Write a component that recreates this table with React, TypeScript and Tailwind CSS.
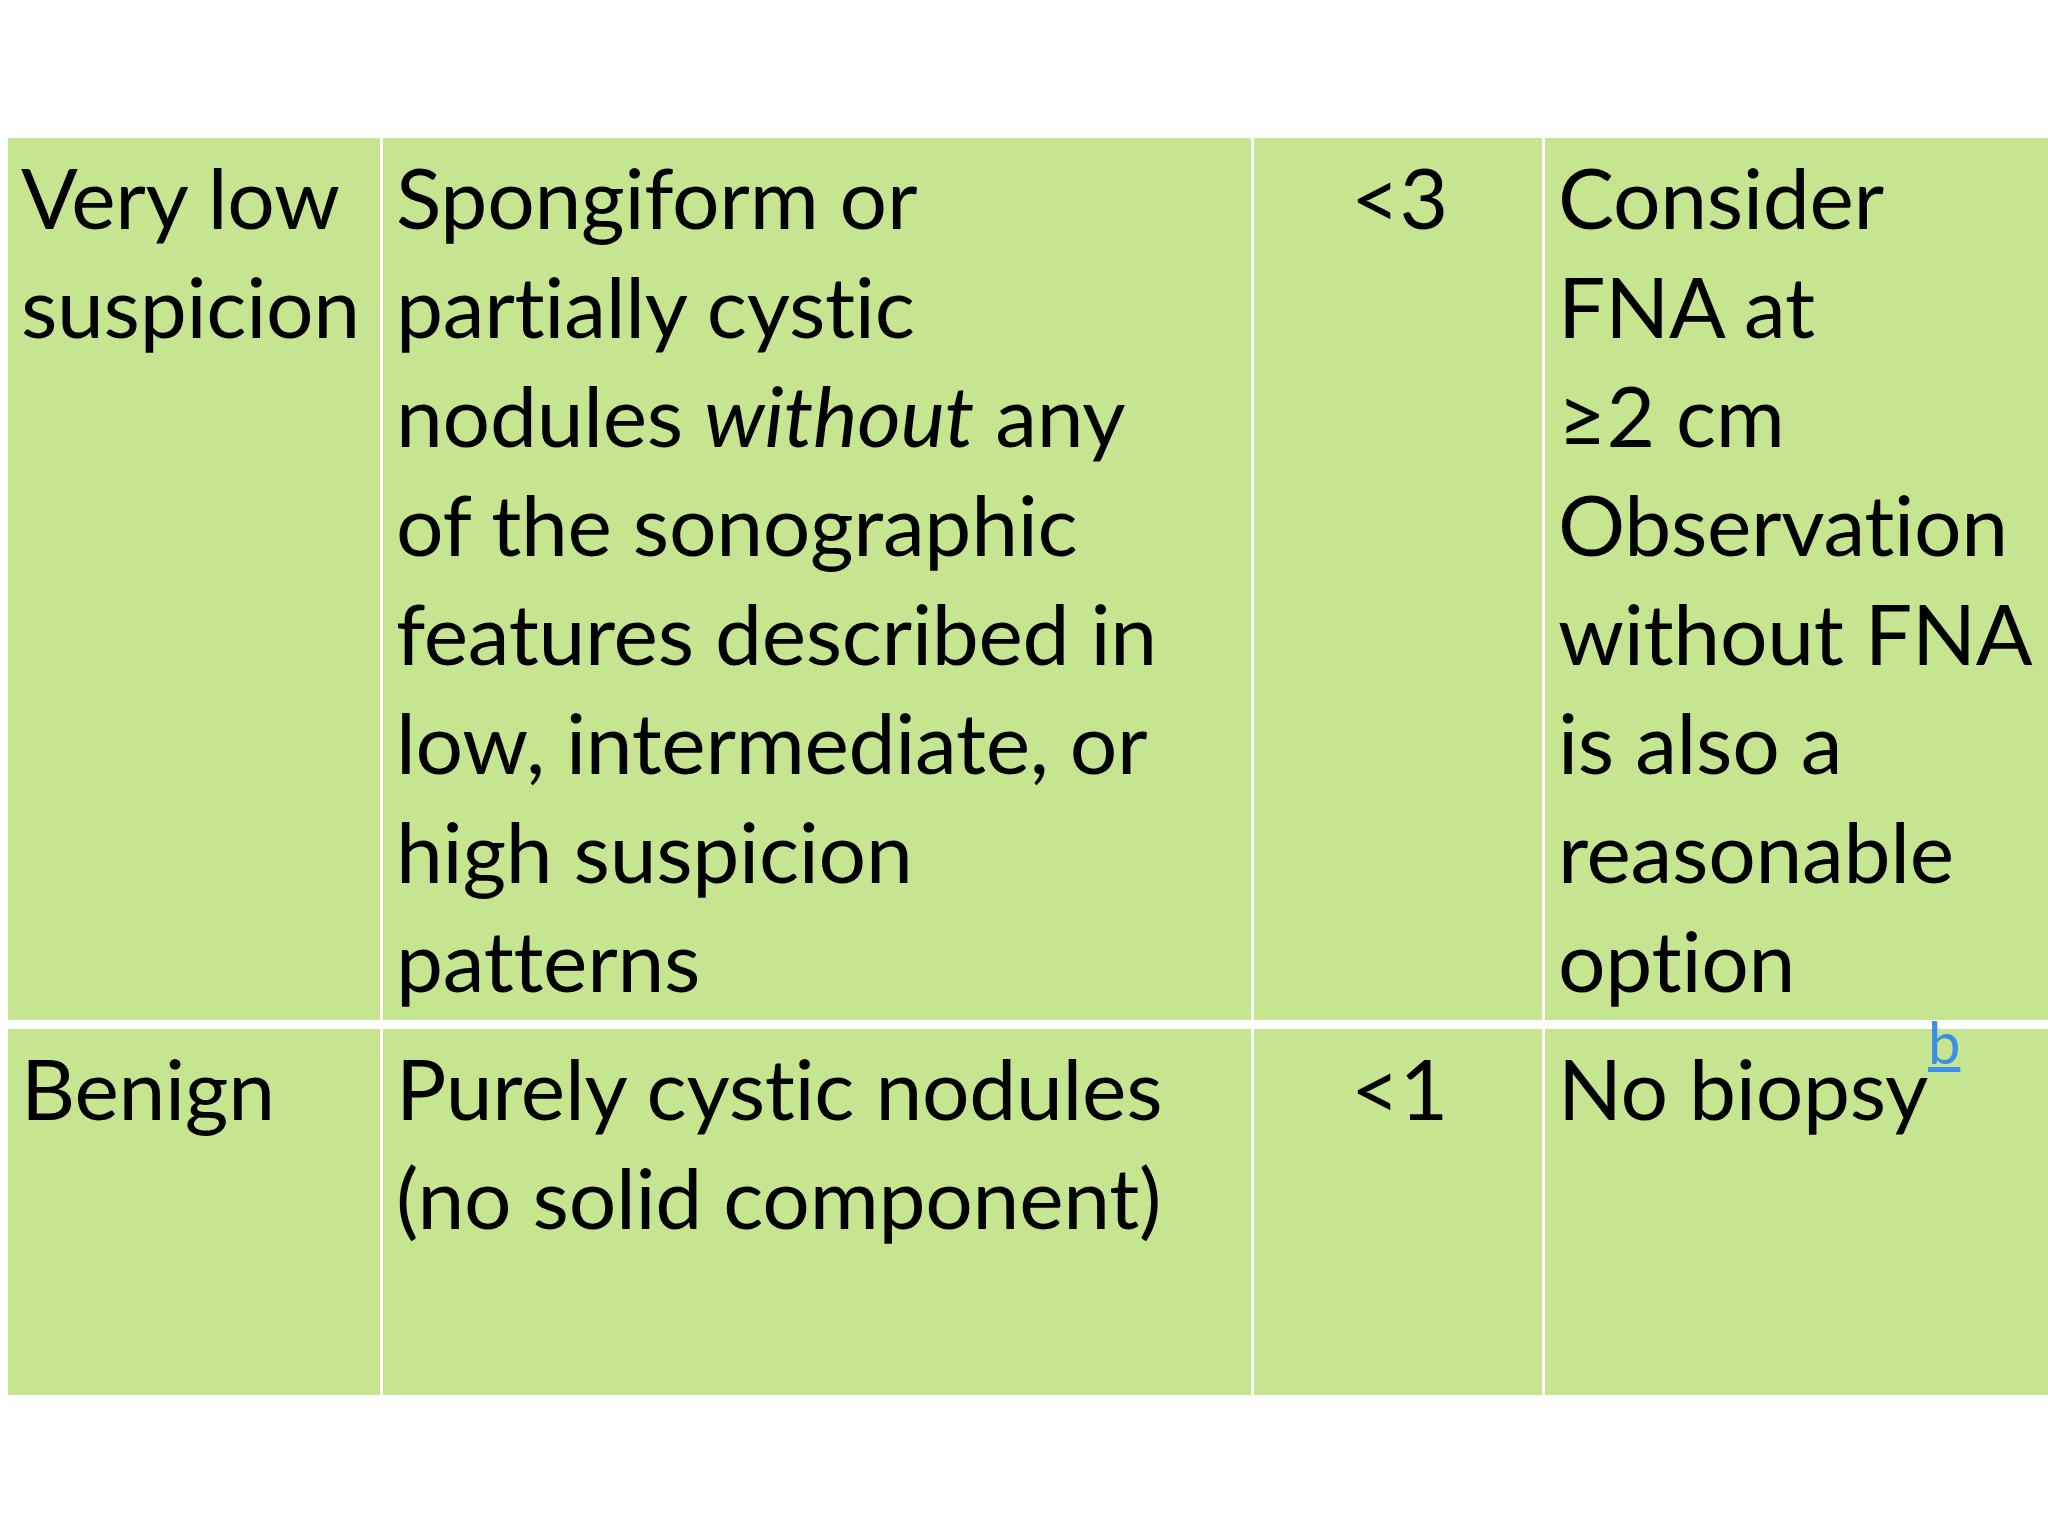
const cell =
  'bg-[#c6e591] text-black pl-[13px] pr-[10px] pt-[4px] text-[84px] leading-[109px] whitespace-nowrap [font-variant-ligatures:none] tracking-[-0.3px]'

export default function App() {
  return (
    <div
      className="w-[2048px] h-[1536px] bg-white pt-[138px] pl-[8px]"
      style={{ fontFamily: 'Lato, "Open Sans", sans-serif' }}
    >
      <div className="grid grid-cols-[372px_868px_288px_1fr] grid-rows-[882px_366px] gap-x-[3px] gap-y-[9px]">
        {/* row 1 */}
        <div className={cell}>
          Very low
          <br />
          suspicion
        </div>
        <div className={cell}>
          Spongiform or
          <br />
          partially cystic
          <br />
          nodules <i>without</i> any
          <br />
          of the sonographic
          <br />
          features described in
          <br />
          low, intermediate, or
          <br />
          high suspicion
          <br />
          patterns
        </div>
        <div className={cell + ' text-center'}>&lt;3</div>
        <div className={cell}>
          Consider
          <br />
          FNA at
          <br />
          ≥2 cm
          <br />
          Observation
          <br />
          without FNA
          <br />
          is also a
          <br />
          reasonable
          <br />
          option
        </div>

        {/* row 2 */}
        <div className={cell}>Benign</div>
        <div className={cell}>
          Purely cystic nodules
          <br />
          (no solid component)
        </div>
        <div className={cell + ' text-center'}>&lt;1</div>
        <div className={cell}>
          No biopsy
          <span className="relative top-[-56px] text-[58px] text-[#3b8fe6] underline">b</span>
        </div>
      </div>
    </div>
  )
}
